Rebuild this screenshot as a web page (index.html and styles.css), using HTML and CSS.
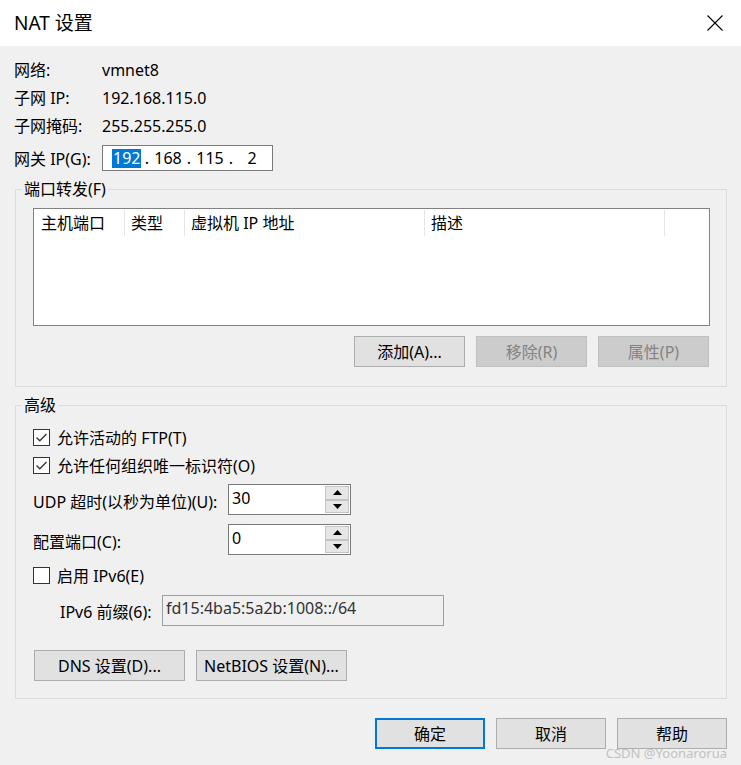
FILE: index.html
```html
<!DOCTYPE html>
<html lang="zh-CN">
<head>
<meta charset="utf-8">
<title>NAT 设置</title>
<link rel="stylesheet" href="styles.css">
</head>
<body>
<div class="dialog">
  <div class="titlebar">
    <span class="title">NAT 设置</span>
    <svg class="close" width="16" height="16" viewBox="0 0 16 16"><path d="M0.5 0.5L15.5 15.5M15.5 0.5L0.5 15.5" stroke="#000" stroke-width="1.1" fill="none"/></svg>
  </div>
  <div class="content">
    <div class="info-row"><span class="info-label">网络:</span><span>vmnet8</span></div>
    <div class="info-row"><span class="info-label">子网 IP:</span><span>192.168.115.0</span></div>
    <div class="info-row"><span class="info-label">子网掩码:</span><span>255.255.255.0</span></div>
    <div class="gw-row">
      <span class="info-label">网关 IP(G):</span>
      <div class="ip-input">
        <span class="seg"><span class="sel">192</span></span><span class="dot">.</span><span class="seg">168</span><span class="dot">.</span><span class="seg">115</span><span class="dot">.</span><span class="seg">2</span>
      </div>
    </div>

    <fieldset class="group group-pf">
      <legend>端口转发(F)</legend>
      <div class="pf-body">
        <div class="listview">
          <div class="lv-header">
            <span class="lv-col c1">主机端口</span>
            <span class="lv-col c2">类型</span>
            <span class="lv-col c3">虚拟机 IP 地址</span>
            <span class="lv-col c4">描述</span>
          </div>
        </div>
        <div class="btn-row">
          <button class="btn">添加(A)...</button>
          <button class="btn" disabled>移除(R)</button>
          <button class="btn" disabled>属性(P)</button>
        </div>
      </div>
    </fieldset>

    <fieldset class="group group-adv">
      <legend>高级</legend>
      <div class="adv-body">
        <div class="cb-row">
          <span class="cb"><svg width="15" height="15" viewBox="0 0 15 15"><path d="M2.5 7.5L5.8 10.8L12.5 4" stroke="#333" stroke-width="1.3" fill="none"/></svg></span>
          <span>允许活动的 FTP(T)</span>
        </div>
        <div class="cb-row cb-next">
          <span class="cb"><svg width="15" height="15" viewBox="0 0 15 15"><path d="M2.5 7.5L5.8 10.8L12.5 4" stroke="#333" stroke-width="1.3" fill="none"/></svg></span>
          <span>允许任何组织唯一标识符(O)</span>
        </div>
        <div class="spin-row spin-first">
          <span class="spin-label">UDP 超时(以秒为单位)(U):</span>
          <div class="spin">
            <span class="spin-val">30</span>
            <span class="spin-btns">
              <span class="spin-b"><svg width="9" height="5" viewBox="0 0 9 5"><path d="M0 5L4.5 0L9 5Z" fill="#000"/></svg></span>
              <span class="spin-b"><svg width="9" height="5" viewBox="0 0 9 5"><path d="M0 0L4.5 5L9 0Z" fill="#000"/></svg></span>
            </span>
          </div>
        </div>
        <div class="spin-row spin-second">
          <span class="spin-label">配置端口(C):</span>
          <div class="spin">
            <span class="spin-val">0</span>
            <span class="spin-btns">
              <span class="spin-b"><svg width="9" height="5" viewBox="0 0 9 5"><path d="M0 5L4.5 0L9 5Z" fill="#000"/></svg></span>
              <span class="spin-b"><svg width="9" height="5" viewBox="0 0 9 5"><path d="M0 0L4.5 5L9 0Z" fill="#000"/></svg></span>
            </span>
          </div>
        </div>
        <div class="cb-row cb-ipv6">
          <span class="cb"></span>
          <span>启用 IPv6(E)</span>
        </div>
        <div class="prefix-row">
          <span class="prefix-label">IPv6 前缀(6):</span>
          <div class="prefix-input">fd15:4ba5:5a2b:1008::/64</div>
        </div>
        <div class="dns-row">
          <button class="btn btn-wide">DNS 设置(D)...</button>
          <button class="btn btn-wide">NetBIOS 设置(N)...</button>
        </div>
      </div>
    </fieldset>

    <div class="footer">
      <button class="btn btn-foot btn-default">确定</button>
      <button class="btn btn-foot">取消</button>
      <button class="btn btn-foot">帮助</button>
    </div>
  </div>
  <div class="watermark">CSDN @Yoonarorua</div>
</div>
</body>
</html>
```
FILE: styles.css
```css
* { box-sizing: border-box; }
html, body { margin: 0; padding: 0; background: #fff; }
body {
  font-family: "Noto Sans", "Noto Sans CJK SC", sans-serif;
  font-size: 16px;
  color: #000;
}
.dialog {
  position: relative;
  width: 741px;
  height: 765px;
  background: #f0f0f0;
  overflow: hidden;
}
.titlebar {
  height: 46px;
  background: #fff;
  display: flex;
  align-items: center;
  justify-content: space-between;
  padding: 0 18px 0 14px;
}
.title { font-size: 19px; line-height: 24px; }
.close { display: block; }

.content { padding: 10px 14px 0; }
.info-row { display: flex; height: 28px; line-height: 28px; }
.info-label { width: 88px; flex: none; }
.gw-row { display: flex; align-items: center; margin-top: 5px; height: 26px; }
.ip-input {
  width: 171px;
  height: 26px;
  border: 1px solid #7a7a7a;
  background: #fff;
  display: flex;
  align-items: center;
  padding-left: 9px;
}
.seg { width: 28px; text-align: center; line-height: 20px; }
.dot { width: 14px; text-align: center; line-height: 20px; }
.sel {
  display: inline-block;
  background: #0078d7;
  color: #fff;
  padding: 0 1px;
  line-height: 19px;
}

.group {
  margin: 8px 0 0 1px;
  width: 712px;
  padding: 0;
  border: 1px solid #dcdcdc;
  min-width: 0;
}
.group legend {
  margin-left: 6px;
  padding: 0 2px;
  line-height: 20px;
}
.pf-body { padding: 9px 16px 19px 17px; }
.listview {
  height: 118px;
  border: 1px solid #828282;
  background: #fff;
}
.lv-header { display: flex; padding-top: 1px; }
.lv-col {
  height: 26px;
  line-height: 26px;
  border-right: 1px solid #e5e5e5;
  padding-left: 6px;
  white-space: nowrap;
  flex: none;
}
.c1 { width: 91px; padding-left: 7px; }
.c2 { width: 60px; }
.c3 { width: 240px; }
.c4 { width: 240px; }

.btn-row {
  display: flex;
  justify-content: flex-end;
  gap: 11px;
  margin-top: 10px;
  padding-right: 1px;
}
.btn {
  width: 111px;
  height: 31px;
  border: 1px solid #adadad;
  background: #e1e1e1;
  font: inherit;
  color: #000;
  padding: 0;
  line-height: 20px;
}
.btn:disabled {
  background: #cccccc;
  border-color: #bfbfbf;
  color: #838383;
}

.group-adv { margin-top: 8px; }
.adv-body { padding: 10px 16px 17px 17px; }
.cb-row { display: flex; align-items: center; height: 24px; }
.cb-next { margin-top: 4px; }
.cb-ipv6 { margin-top: 8px; }
.cb {
  width: 17px;
  height: 17px;
  border: 1px solid #333;
  background: #fff;
  margin-right: 7px;
  flex: none;
  display: flex;
  align-items: center;
  justify-content: center;
}
.cb svg { display: block; }

.spin-row { display: flex; align-items: center; }
.spin-first { margin-top: 7px; }
.spin-second { margin-top: 9px; }
.spin-label { width: 195px; flex: none; padding-top: 2px; }
.spin {
  width: 123px;
  height: 31px;
  border: 1px solid #7a7a7a;
  background: #fff;
  display: flex;
}
.spin-val { flex: 1; padding-left: 3px; line-height: 26px; }
.spin-btns {
  width: 25px;
  display: flex;
  flex-direction: column;
  padding: 1px 1px 1px 0;
}
.spin-b {
  flex: 1;
  border: 1px solid #c4c4c4;
  background: #e6e6e6;
  display: flex;
  align-items: center;
  justify-content: center;
}
.spin-b svg { display: block; }

.prefix-row { display: flex; align-items: center; margin-top: 8px; padding-left: 27px; }
.prefix-label { width: 102px; flex: none; }
.prefix-input {
  width: 282px;
  height: 31px;
  border: 1px solid #a0a0a0;
  background: #f0f0f0;
  padding: 0 3px;
  line-height: 24px;
  color: #333;
}

.dns-row { display: flex; gap: 11px; margin-top: 24px; padding-left: 1px; }
.btn-wide { width: 151px; }

.footer {
  display: flex;
  justify-content: flex-end;
  gap: 11px;
  margin-top: 19px;
}
.btn-foot { width: 110px; }
.btn-default { border: 2px solid #0078d7; }

.watermark {
  position: absolute;
  right: 14px;
  bottom: 4px;
  font-size: 13px;
  line-height: 16px;
  color: #c2c2c2;
}
```
